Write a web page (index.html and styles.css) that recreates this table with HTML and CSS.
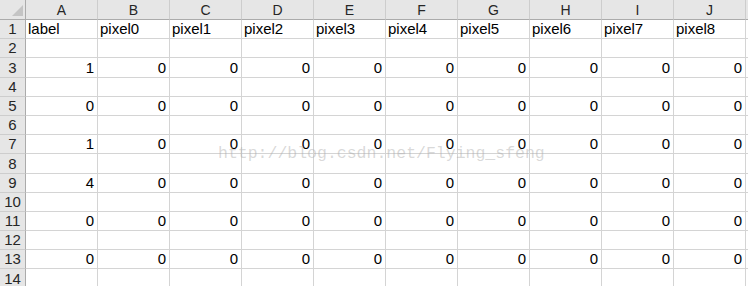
FILE: index.html
```html
<!DOCTYPE html>
<html>
<head>
<meta charset="utf-8">
<link rel="stylesheet" href="styles.css">
</head>
<body>
<div class="sheet">
  <div class="corner"><svg width="11" height="11" viewBox="0 0 11 11"><polygon points="11,0 11,11 0,11" fill="#c4c4c4"/></svg></div>
  <div class="ch">A</div><div class="ch">B</div><div class="ch">C</div><div class="ch">D</div><div class="ch">E</div><div class="ch">F</div><div class="ch">G</div><div class="ch">H</div><div class="ch">I</div><div class="ch">J</div><div class="chpad"></div>

  <div class="rh">1</div><div class="c">label</div><div class="c">pixel0</div><div class="c">pixel1</div><div class="c">pixel2</div><div class="c">pixel3</div><div class="c">pixel4</div><div class="c">pixel5</div><div class="c">pixel6</div><div class="c">pixel7</div><div class="c">pixel8</div><div class="pad"></div>

  <div class="rh">2</div><div class="c"></div><div class="c"></div><div class="c"></div><div class="c"></div><div class="c"></div><div class="c"></div><div class="c"></div><div class="c"></div><div class="c"></div><div class="c"></div><div class="pad"></div>

  <div class="rh">3</div><div class="c n">1</div><div class="c n">0</div><div class="c n">0</div><div class="c n">0</div><div class="c n">0</div><div class="c n">0</div><div class="c n">0</div><div class="c n">0</div><div class="c n">0</div><div class="c n">0</div><div class="pad"></div>

  <div class="rh">4</div><div class="c"></div><div class="c"></div><div class="c"></div><div class="c"></div><div class="c"></div><div class="c"></div><div class="c"></div><div class="c"></div><div class="c"></div><div class="c"></div><div class="pad"></div>

  <div class="rh">5</div><div class="c n">0</div><div class="c n">0</div><div class="c n">0</div><div class="c n">0</div><div class="c n">0</div><div class="c n">0</div><div class="c n">0</div><div class="c n">0</div><div class="c n">0</div><div class="c n">0</div><div class="pad"></div>

  <div class="rh">6</div><div class="c"></div><div class="c"></div><div class="c"></div><div class="c"></div><div class="c"></div><div class="c"></div><div class="c"></div><div class="c"></div><div class="c"></div><div class="c"></div><div class="pad"></div>

  <div class="rh">7</div><div class="c n">1</div><div class="c n">0</div><div class="c n">0</div><div class="c n">0</div><div class="c n">0</div><div class="c n">0</div><div class="c n">0</div><div class="c n">0</div><div class="c n">0</div><div class="c n">0</div><div class="pad"></div>

  <div class="rh">8</div><div class="c"></div><div class="c"></div><div class="c"></div><div class="c"></div><div class="c"></div><div class="c"></div><div class="c"></div><div class="c"></div><div class="c"></div><div class="c"></div><div class="pad"></div>

  <div class="rh">9</div><div class="c n">4</div><div class="c n">0</div><div class="c n">0</div><div class="c n">0</div><div class="c n">0</div><div class="c n">0</div><div class="c n">0</div><div class="c n">0</div><div class="c n">0</div><div class="c n">0</div><div class="pad"></div>

  <div class="rh">10</div><div class="c"></div><div class="c"></div><div class="c"></div><div class="c"></div><div class="c"></div><div class="c"></div><div class="c"></div><div class="c"></div><div class="c"></div><div class="c"></div><div class="pad"></div>

  <div class="rh">11</div><div class="c n">0</div><div class="c n">0</div><div class="c n">0</div><div class="c n">0</div><div class="c n">0</div><div class="c n">0</div><div class="c n">0</div><div class="c n">0</div><div class="c n">0</div><div class="c n">0</div><div class="pad"></div>

  <div class="rh">12</div><div class="c"></div><div class="c"></div><div class="c"></div><div class="c"></div><div class="c"></div><div class="c"></div><div class="c"></div><div class="c"></div><div class="c"></div><div class="c"></div><div class="pad"></div>

  <div class="rh">13</div><div class="c n">0</div><div class="c n">0</div><div class="c n">0</div><div class="c n">0</div><div class="c n">0</div><div class="c n">0</div><div class="c n">0</div><div class="c n">0</div><div class="c n">0</div><div class="c n">0</div><div class="pad"></div>

  <div class="rh">14</div><div class="c"></div><div class="c"></div><div class="c"></div><div class="c"></div><div class="c"></div><div class="c"></div><div class="c"></div><div class="c"></div><div class="c"></div><div class="c"></div><div class="pad"></div>

  <div class="watermark">http://blog.csdn.net/Flying_sfeng</div>
</div>
</body>
</html>
```

FILE: styles.css
```css
html, body {
  margin: 0;
  padding: 0;
  background: #ffffff;
  overflow: hidden;
}

.sheet {
  position: relative;
  width: 748px;
  height: 286px;
  overflow: hidden;
  display: grid;
  grid-template-columns: 26px repeat(10, 72px) 2px;
  grid-template-rows: 20px repeat(14, 19.2px);
  font-family: "Liberation Sans", Arial, sans-serif;
  font-size: 15px;
  color: #000000;
}

.corner {
  background: #e6e6e6;
  border-right: 1px solid #ababab;
  border-bottom: 1px solid #ababab;
  display: flex;
  align-items: flex-end;
  justify-content: flex-end;
  padding: 0 2px 3px 0;
}

.ch {
  background: #e6e6e6;
  border-right: 1px solid #cdcdcd;
  border-bottom: 1px solid #ababab;
  display: flex;
  align-items: center;
  justify-content: center;
  color: #262626;
  font-size: 14px;
  padding-top: 1px;
}

.chpad {
  background: #e6e6e6;
  border-bottom: 1px solid #ababab;
}

.rh {
  background: #e6e6e6;
  border-right: 1px solid #ababab;
  border-bottom: 1px solid #cdcdcd;
  display: flex;
  align-items: flex-end;
  justify-content: center;
  color: #262626;
  font-size: 15px;
  line-height: 16px;
  padding-bottom: 1px;
}

.c {
  border-right: 1px solid #d4d4d4;
  border-bottom: 1px solid #d4d4d4;
  display: flex;
  align-items: flex-end;
  padding: 0 3px 1px 2px;
  line-height: 16px;
  white-space: nowrap;
  overflow: hidden;
}

.n {
  justify-content: flex-end;
}

.pad {
  border-bottom: 1px solid #d4d4d4;
}

.watermark {
  position: absolute;
  left: 218px;
  top: 144px;
  font-family: "Liberation Mono", "DejaVu Sans Mono", monospace;
  font-size: 16.5px;
  line-height: 20px;
  color: rgba(170, 170, 170, 0.45);
  white-space: nowrap;
  pointer-events: none;
}
```
